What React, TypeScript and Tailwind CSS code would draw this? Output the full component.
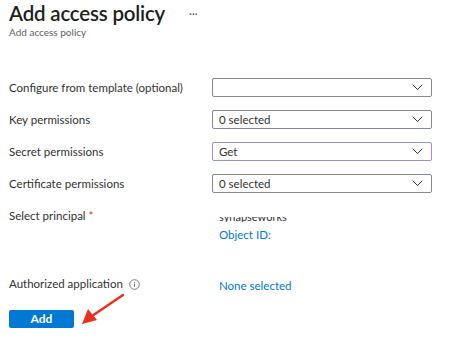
import React from "react";

const font = { fontFamily: 'Lato, "Noto Sans", sans-serif' };

function Chevron() {
  return (
    <svg width="11" height="7" viewBox="0 0 11 7" fill="none">
      <path d="M0.8 0.8 L5.5 5.5 L10.2 0.8" stroke="#323130" strokeWidth="1" />
    </svg>
  );
}

function Dropdown({ value, focused }: { value?: string; focused?: boolean }) {
  return (
    <div
      className={
        "flex h-[19px] w-[220px] items-center justify-between rounded-[2px] border pl-[6px] pr-[8px] text-[11.5px] text-[#323130] " +
        (focused ? "border-[#a68bc4]" : "border-[#8a8886]")
      }
    >
      <span className="leading-none">{value ?? ""}</span>
      <Chevron />
    </div>
  );
}

function Row({ label, children }: { label: React.ReactNode; children: React.ReactNode }) {
  return (
    <div className="flex h-[32px] items-start">
      <div className="w-[203px] pt-[1px] text-[11.5px] leading-[18px] text-[#323130]">{label}</div>
      {children}
    </div>
  );
}

export default function App() {
  return (
    <div className="relative h-[349px] w-[474px] overflow-hidden bg-white" style={font}>
      <div className="px-[9px] pt-[2px]">
        <div className="flex items-center">
          <h1 className="text-[20.5px] font-semibold leading-[22px] tracking-[-0.2px] text-[#201f1e]">Add access policy</h1>
          <span className="ml-[24px] text-[11px] leading-none text-[#605e5c]">···</span>
        </div>
        <div className="mt-[1px] text-[10px] leading-[14px] text-[#605e5c]">Add access policy</div>

        <div className="mt-[39px] flex flex-col">
          <Row label="Configure from template (optional)">
            <Dropdown />
          </Row>
          <Row label="Key permissions">
            <Dropdown value="0 selected" />
          </Row>
          <Row label="Secret permissions">
            <Dropdown value="Get" focused />
          </Row>
          <Row label="Certificate permissions">
            <Dropdown value="0 selected" />
          </Row>
          <div className="flex h-[69px] items-start">
            <div className="w-[203px] pt-[1px] text-[11.5px] leading-[18px] text-[#323130]">
              Select principal <span className="text-[#d13438]">*</span>
            </div>
            <div className="flex flex-col pl-[7px]">
              <div className="mt-[11px] h-[5px] overflow-hidden">
                <div className="-mt-[7px] text-[11px] leading-[14px] text-[#323130]">synapseworks</div>
              </div>
              <div className="mt-[5px] text-[11.5px] leading-[16px] text-[#0078d4]">Object ID:</div>
            </div>
          </div>
          <div className="flex h-[35px] items-start">
            <div className="flex w-[203px] items-center text-[11.5px] leading-[18px] text-[#323130]">
              Authorized application
              <svg className="ml-[6px]" width="11" height="11" viewBox="0 0 11 11" fill="none">
                <circle cx="5.5" cy="5.5" r="4.8" stroke="#605e5c" strokeWidth="0.8" />
                <path d="M5.5 4.6 V8" stroke="#605e5c" strokeWidth="0.9" />
                <circle cx="5.5" cy="3.2" r="0.55" fill="#605e5c" />
              </svg>
            </div>
            <div className="pl-[7px] pt-[2px] text-[11.5px] leading-[18px] text-[#0078d4]">None selected</div>
          </div>
          <div>
            <button className="flex h-[18px] w-[65px] items-center justify-center rounded-[2px] bg-[#0078d4] text-[12px] font-bold text-white">
              Add
            </button>
          </div>
        </div>
      </div>
      <svg className="absolute left-0 top-0" width="474" height="349" viewBox="0 0 474 349" fill="none">
        <path d="M123 295 L92 316" stroke="#e8301c" strokeWidth="2.4" strokeLinecap="round" />
        <path d="M82 324 L88 309 L97 320 Z" fill="#e8301c" />
      </svg>
    </div>
  );
}
